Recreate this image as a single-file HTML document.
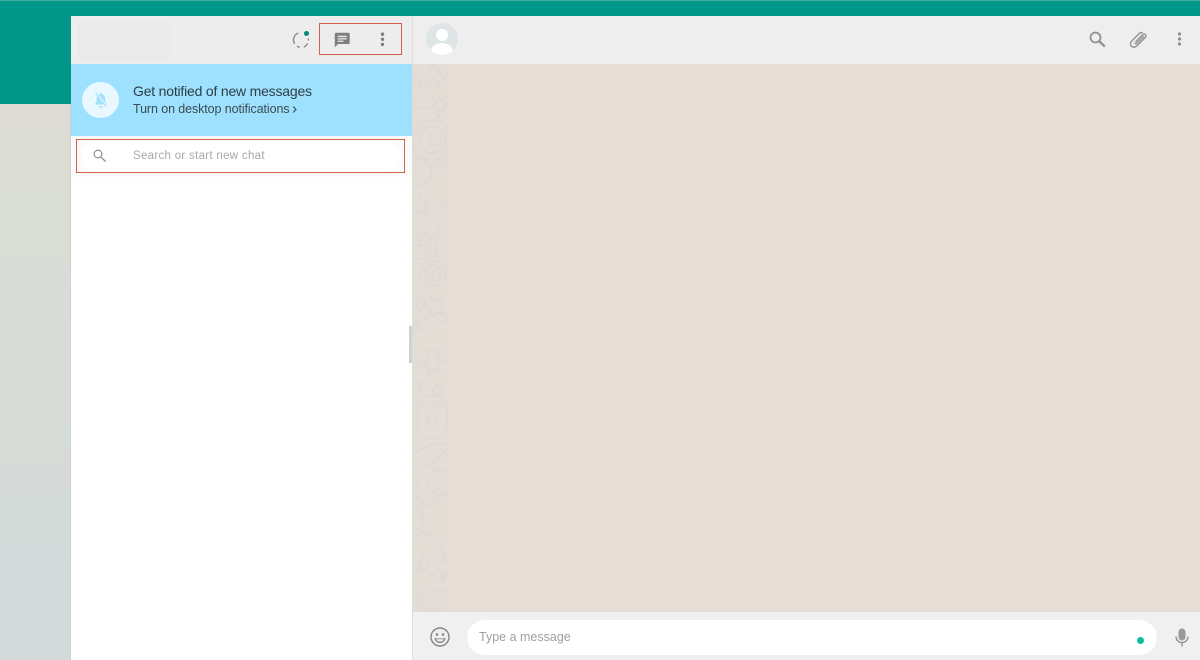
<!DOCTYPE html>
<html><head><meta charset="utf-8"><style>
*{box-sizing:border-box;margin:0;padding:0}
html,body{width:1200px;height:660px;overflow:hidden;background:#fff;font-family:"Liberation Sans",sans-serif}
#r{position:absolute;left:0;top:0;width:1200px;height:660px;overflow:hidden;filter:blur(.35px)}
.a{position:absolute}
svg{position:absolute;overflow:visible}
</style></head><body><div id="r">
<div class="a" style="left:0;top:0;width:1200px;height:660px;background:linear-gradient(180deg,#dcdcd5 100px,#d8dcd7 350px,#d2dadb 660px)"></div>
<div class="a" style="left:0;top:0;width:1200px;height:104px;background:#009688"></div>
<div class="a" style="left:0;top:0;width:1200px;height:1px;background:#3fae9f"></div>
<div class="a" style="left:70px;top:104px;width:1px;height:556px;background:#cdd0cd"></div>

<!-- sidebar -->
<div class="a" style="left:71px;top:16px;width:342px;height:644px;background:#fff"></div>
<div class="a" style="left:71px;top:16px;width:341px;height:48px;background:#ededed"></div>
<div class="a" style="left:78px;top:22px;width:93px;height:38px;background:#eaeaea"></div>
<div class="a" style="left:412px;top:16px;width:1px;height:644px;background:#dedede"></div>
<div class="a" style="left:71px;top:64px;width:341px;height:72px;background:#9de1fe"></div>
<div class="a" style="left:71px;top:136px;width:341px;height:41px;background:#fbfbfb"></div>
<div class="a" style="left:81px;top:142px;width:320px;height:30px;background:#fff;border-radius:15px"></div>
<div class="a" style="left:409px;top:326px;width:3px;height:37px;background:#cfd2d2"></div>

<!-- status icon -->
<svg style="left:292px;top:31px" width="18" height="18" viewBox="0 0 18 18" fill="none" stroke="#8a8a8a" stroke-width="1.400">
<path d="M6.400 2A7.400 7.400 0 0 0 2.600 12.800"/><path d="M5 15.200A7.400 7.400 0 0 0 7.800 16.300"/><path d="M11.800 16A7.400 7.400 0 0 0 15.600 12.400"/><path d="M16.400 9.500A7.400 7.400 0 0 0 16.200 7.500"/>
</svg>
<div class="a" style="left:304px;top:31px;width:5px;height:5px;border-radius:50%;background:#00897b"></div>

<!-- chat icon -->
<svg style="left:334px;top:32px" width="16" height="16" viewBox="0 0 16 16">
<path fill="#7f7f7f" d="M2 0.800h12.400a1.300 1.300 0 0 1 1.300 1.300v8.600a1.300 1.300 0 0 1-1.300 1.300H4L0.800 15.400V2.100A1.300 1.300 0 0 1 2 0.800z"/>
<path fill="#ededed" d="M3.600 3.800h9v1.300h-9zM3.600 6.200h9v1.300h-9zM3.600 8.600h5.800v1.300H3.600z"/>
</svg>
<!-- menu -->
<svg style="left:380px;top:32px" width="5" height="15" viewBox="0 0 5 15" fill="#7f7f7f"><circle cx="2.500" cy="2.200" r="1.700"/><circle cx="2.500" cy="7.300" r="1.700"/><circle cx="2.500" cy="12.400" r="1.700"/></svg>
<!-- red boxes -->
<div class="a" style="left:319px;top:23px;width:83px;height:32px;border:1px solid #d2604a"></div>
<div class="a" style="left:76px;top:139px;width:329px;height:34px;border:1px solid #d2604a"></div>

<!-- banner -->
<div class="a" style="left:82px;top:82px;width:37px;height:36px;border-radius:50%;background:#e9f8fe"></div>
<svg style="left:93px;top:91px" width="16" height="18" viewBox="0 0 16 18">
<path fill="#9de1fe" d="M7.600 1.500a1 1 0 0 1 1 1v.6c2.400.5 3.600 2.500 3.600 4.900v3l1.500 1.700v.8H2v-.8l1.500-1.700V8c0-2.400 1.300-4.400 3.200-4.900V2.500a1 1 0 0 1 .9-1zM6 15h3.400a1.700 1.700 0 0 1-3.400 0z"/>
<path stroke="#e9f8fe" stroke-width="2.400" d="M3 2l10 13"/><path stroke="#9de1fe" stroke-width="1.200" d="M2.500 2l10.500 13.500"/>
</svg>
<div class="a" style="left:133px;top:83px;font-size:14px;line-height:16px;color:#2f3e46;white-space:nowrap;letter-spacing:-.2px">Get notified of new messages</div>
<div class="a" style="left:133px;top:102px;font-size:12.500px;line-height:14px;color:#3c4b52;white-space:nowrap;letter-spacing:-.1px">Turn on desktop notifications</div>
<svg style="left:292px;top:105px" width="6" height="9" viewBox="0 0 6 9" fill="none" stroke="#3c4b52" stroke-width="1.100"><path d="M1.200 1.500l2.800 3-2.800 3"/></svg>

<!-- search -->
<svg style="left:93px;top:149px" width="14" height="14" viewBox="0 0 14 14" fill="none" stroke="#8f8f8f" stroke-width="1.200"><circle cx="5" cy="5" r="3.900"/><path d="M7.900 7.900l4.600 4.600" stroke-width="1.300"/></svg>
<div class="a" style="left:133px;top:149px;font-size:11.500px;line-height:14px;color:#a8a8a8;white-space:nowrap;letter-spacing:.3px">Search or start new chat</div>

<!-- right header -->
<div class="a" style="left:413px;top:16px;width:787px;height:48px;background:#eeeeee"></div>
<div class="a" style="left:426px;top:23px;width:32px;height:32px;border-radius:50%;background:#dfe5e7;overflow:hidden">
<div class="a" style="left:10px;top:6px;width:12px;height:12px;border-radius:50%;background:#fff"></div>
<div class="a" style="left:5px;top:20px;width:22px;height:16px;border-radius:50%;background:#fff"></div>
</div>
<svg style="left:1089px;top:31px" width="17" height="17" viewBox="0 0 17 17" fill="none" stroke="#8f8f8f" stroke-width="1.700"><circle cx="6.500" cy="6.500" r="5"/><path d="M10.200 10.200l5.600 5.400" stroke-width="2.200"/></svg>
<svg style="left:1129px;top:31px" width="19" height="17" viewBox="0 0 19 17" fill="none" stroke="#969696" stroke-width="1.500" stroke-linecap="round"><path d="M7 10.500l6.500-6.700c1-1 2.400-.9 3 0 .7.800.6 1.800-.4 2.800L8 14.700c-1.700 1.700-4 1.900-5.500.6-1.500-1.500-1.300-3.700.4-5.400l7.200-7.300c1-1 2-1.300 3-1"/><path d="M6 12.200c.6.600 1.400.5 2-.1l6.300-6.400"/></svg>
<svg style="left:1177px;top:32px" width="5" height="14" viewBox="0 0 5 14" fill="#8f8f8f"><circle cx="2.500" cy="2" r="1.600"/><circle cx="2.500" cy="7" r="1.600"/><circle cx="2.500" cy="12" r="1.600"/></svg>

<!-- chat bg -->
<div class="a" style="left:413px;top:64px;width:787px;height:549px;background:#e5ddd6"></div>
<div class="a" style="left:413px;top:64px;width:35px;height:549px;background:#e4ddd6;overflow:hidden">
<svg style="left:0;top:0;filter:blur(.6px)" width="35" height="549" viewBox="0 0 35 549" fill="none" stroke="#dcd6cf" stroke-width="1.100">
<path d="M20 2l12 13-5 5L15 8zM2 14l6 4-3 6-5-3"/>
<circle cx="14" cy="21" r="2.500"/><circle cx="24" cy="24" r="1.200"/>
<ellipse cx="12" cy="38" rx="10" ry="7"/><path d="M26 32l4 7 4 1-4 3 1 6-5-3-5 2"/>
<circle cx="25" cy="52" r="1.500"/>
<circle cx="20" cy="76" r="20"/><circle cx="20" cy="76" r="13"/><circle cx="22" cy="76" r="6"/>
<path d="M0 95c8-3 18 2 18 12s-6 15-18 15"/><path d="M24 92l3 3 3-3 3 3v6l-4 3-5-2z"/>
<path d="M6 130l3 7 7 1-5 5 1 7-6-3-6 3M25 140c3-3 9-3 10 0v12h-8"/>
<circle cx="13" cy="152" r="1.800"/><circle cx="26" cy="160" r="1.500"/>
<path d="M12 168l3 5 5 1-4 4 1 5-5-3-5 2 1-5-3-4 5-1zM0 182c6-2 12 0 14 3 2 5-1 10-8 10H0"/>
<path d="M28 165c-4 6-5 15-3 25"/>
<circle cx="20" cy="209" r="12.500"/><circle cx="20" cy="209" r="8"/><path d="M22 204l-3 10M17 193h6l-1-5h-4z"/>
<path d="M0 240l8-7 5 6-7 8zM18 232l5 5 6-1-2 7 3 5-7 1-4 3-2-7-5-2 5-4z"/>
<path d="M2 258l30-10 3 9-28 10zM2 258l-2 18"/>
<path d="M16 285c3 4 10 4 12 1l-3 8 6 3-6 3 2 8-7-4-5 5 1-7-7-3 6-3z"/>
<path d="M2 292l6 5-5 6M0 315l9 3-4 8 4 5"/><path d="M24 320l2 4 4 1-3 3 1 4-4-2-4 2 1-4-3-3 4-1zM0 337c5 2 9 2 12 0"/>
<path d="M5 342l8-10h14l7 9v25l-8 8H12l-7-7zM5 342h29M22 331v11"/><path d="M14 358c1-4 3-6 5-8 2 2 5 5 4 9-1 3-8 3-9-1z"/>
<path d="M0 392c8-10 25-15 35-12M0 404c12 0 25-8 35-20M12 388l3 4M20 386l2 5M27 383l2 4"/>
<circle cx="22" cy="406" r="1.800"/><circle cx="31" cy="407" r="1.800"/>
<circle cx="10" cy="420" r="6"/><path d="M3 430l9 12 23-12M18 428l17-9M20 434l15-8"/>
<path d="M0 440l10 4 1 24-11 6M7 448l-1 10"/>
<circle cx="16" cy="470" r="1.500"/><circle cx="26" cy="472" r="2.500"/><circle cx="26" cy="486" r="3"/><circle cx="31" cy="492" r="2"/>
<path d="M10 492c-3 5-4 12 0 16 5-2 7-7 5-10zM24 498c3-3 10-2 11 0v10l-5 4-6-7z"/>
<circle cx="3" cy="505" r="3"/><circle cx="19" cy="512" r="1.500"/><circle cx="30" cy="515" r="2"/>
<path d="M19 528l16-3M19 528v17M3 526l6 5-1 8-6 3"/>
<path d="M3 549l30-5"/>
</svg>
</div>

<!-- footer -->
<div class="a" style="left:413px;top:612px;width:787px;height:48px;background:#f0f0f0"></div>
<div class="a" style="left:467px;top:620px;width:690px;height:35px;border-radius:18px;background:#fff"></div>
<svg style="left:430px;top:627px" width="20" height="20" viewBox="0 0 20 20" fill="none" stroke="#858585" stroke-width="1.400">
<circle cx="10" cy="10" r="9"/><circle cx="7" cy="7.500" r="1.300" fill="#858585" stroke="none"/><circle cx="13" cy="7.500" r="1.300" fill="#858585" stroke="none"/>
<path d="M4.500 10.800c1.500 1 9.500 1 11 0-.3 3.500-2.500 5.200-5.500 5.200s-5.200-1.700-5.500-5.200z" fill="#858585" stroke="none"/><path d="M6.200 12.200h7.600c-.4 1.500-2 2.300-3.800 2.300s-3.400-.8-3.800-2.300z" fill="#f0f0f0" stroke="none"/>
</svg>
<div class="a" style="left:479px;top:630px;font-size:12.500px;line-height:14px;color:#a0a0a0;white-space:nowrap">Type a message</div>
<div class="a" style="left:1137px;top:637px;width:7px;height:7px;border-radius:50%;background:#09c29a"></div>
<svg style="left:1175px;top:628px" width="14" height="19" viewBox="0 0 14 19" fill="none">
<rect x="3.500" y="0.500" width="7" height="12" rx="3.500" fill="#9a9a9a"/>
<path d="M1 8.500c0 3.500 2.600 6 6 6s6-2.500 6-6M7 14.500v4" stroke="#8a8a8a" stroke-width="1.300"/>
</svg>
</div></body></html>
